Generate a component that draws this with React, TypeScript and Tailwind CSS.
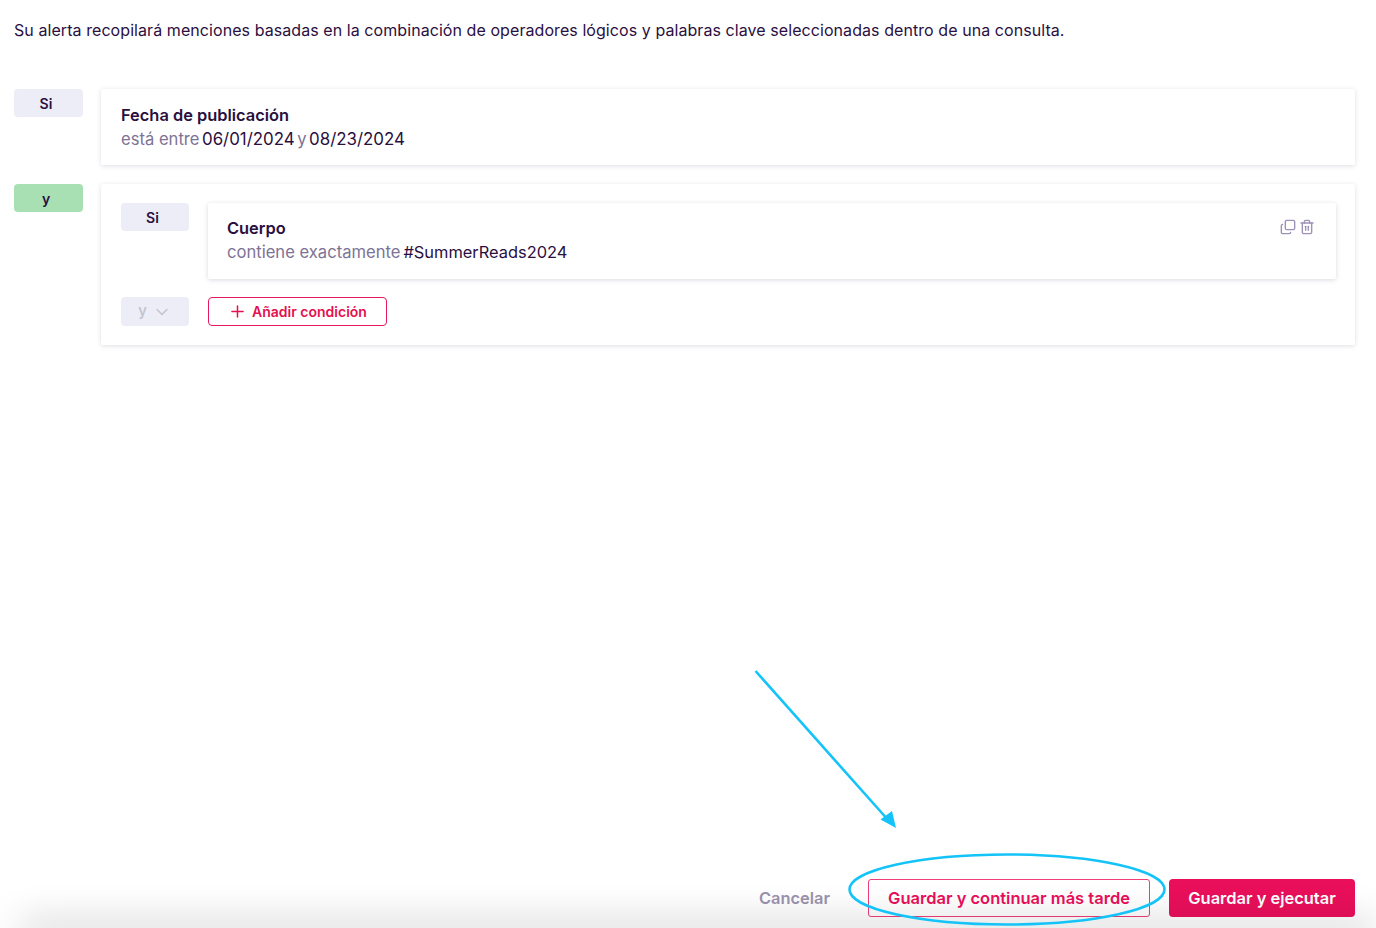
import { Copy, Trash2, Plus, ChevronDown } from "lucide-react";

const F = "font-['Inter','Noto_Sans',sans-serif]";

function Tag({ label, green, narrow }: { label: string; green?: boolean; narrow?: boolean }) {
  return (
    <div className={`flex h-[28px] shrink-0 items-center justify-center rounded-[4px] pr-[5px] text-[14px] font-semibold text-[#2a0f3f] ${narrow ? "w-[68px]" : "w-[69px]"} ${green ? "bg-[#a8e0b4]" : "bg-[#ecedf6]"}`}>
      {label}
    </div>
  );
}

export default function App() {
  return (
    <div className={`relative flex h-[928px] w-[1376px] flex-col overflow-hidden bg-white pl-[14px] pr-[21px] ${F}`}>
      <p className="mt-[18.5px] h-[22.5px] text-[16px] leading-[22px] tracking-[0.07px] text-[#2a0f3f]">
        Su alerta recopilará menciones basadas en la combinación de operadores lógicos y palabras clave seleccionadas dentro de una consulta.
      </p>

      <div className="mt-[48px] flex gap-[18px]">
        <Tag label="Si" />
        <div className="h-[76px] flex-1 rounded-[2px] bg-white pl-[20px] pt-[14px] shadow-[0_1px_5px_rgba(42,15,63,0.14)]">
          <div className="text-[16.4px] font-semibold leading-[24px] text-[#2a0f3f]">Fecha de publicación</div>
          <div className="flex items-baseline gap-[2.5px] text-[16.6px] leading-[24px] text-[#7d7396]">
            <span>está entre</span>
            <span className="text-[16.9px] text-[#2a0f3f]">06/01/2024</span>
            <span>y</span>
            <span className="text-[16.9px] text-[#2a0f3f]">08/23/2024</span>
          </div>
        </div>
      </div>

      <div className="mt-[19px] flex gap-[18px]">
        <Tag label="y" green />
        <div className="h-[161px] flex-1 rounded-[2px] bg-white pl-[20px] pr-[19px] pt-[19px] shadow-[0_1px_5px_rgba(42,15,63,0.14)]">
          <div className="flex gap-[19px]">
            <Tag label="Si" narrow />
            <div className="relative h-[76px] flex-1 rounded-[2px] bg-white pl-[19px] pt-[13px] shadow-[0_1px_5px_rgba(42,15,63,0.16)]">
              <div className="text-[16.4px] font-semibold leading-[24px] text-[#2a0f3f]">Cuerpo</div>
              <div className="flex items-baseline gap-[3px] text-[16.6px] leading-[24px] text-[#7d7396]">
                <span>contiene exactamente</span>
                <span className="text-[16.4px] text-[#2a0f3f]">#SummerReads2024</span>
              </div>
              <div className="absolute right-[21px] top-[16px] flex gap-[3px] text-[#9f92b8]">
                <Copy size={16} strokeWidth={2.1} className="-scale-y-100" />
                <Trash2 size={16} strokeWidth={2.1} />
              </div>
            </div>
          </div>
          <div className="mt-[18px] flex gap-[19px]">
            <div className="flex h-[29px] w-[68px] items-center justify-center gap-[5px] rounded-[4px] bg-[#ecedf6] text-[15px] font-medium text-[#c1c1cf]">
              <span>y</span>
              <ChevronDown size={20} strokeWidth={1.5} />
            </div>
            <button className="flex h-[29px] w-[179px] items-center justify-center gap-[5px] rounded-[4px] border border-[#e4175f] bg-white text-[14px] font-semibold text-[#e4104f]">
              <Plus size={19} strokeWidth={1.9} />
              Añadir condición
            </button>
          </div>
        </div>
      </div>

      <div className="mt-auto mb-[11px] flex items-center justify-end">
        <span className="mr-[38px] text-[16.4px] font-semibold text-[#9b93ae]">Cancelar</span>
        <button className="mr-[19px] flex h-[38px] w-[282px] items-center justify-center rounded-[3px] border border-[#ee3f78] text-[16.5px] font-semibold text-[#ea0f5b]">
          Guardar y continuar más tarde
        </button>
        <button className="flex h-[38px] w-[186px] items-center justify-center rounded-[4px] bg-[#ea0f5b] text-[16.45px] font-semibold text-white">
          Guardar y ejecutar
        </button>
      </div>

      <div className="pointer-events-none absolute -bottom-[20px] left-[20px] right-0 h-[20px] shadow-[0_-8px_36px_rgba(0,0,0,0.18)]" />

      <svg className="pointer-events-none absolute left-0 top-0" width="1376" height="928" fill="none">
        <line x1="755.5" y1="671" x2="889" y2="821" stroke="#14c3f7" strokeWidth="2.6" />
        <path d="M896 828 L880.5 819.5 L892 811 Z" fill="#14c3f7" />
        <ellipse cx="1007" cy="889.5" rx="157.5" ry="35" stroke="#14c3f7" strokeWidth="2.6" />
      </svg>
    </div>
  );
}
